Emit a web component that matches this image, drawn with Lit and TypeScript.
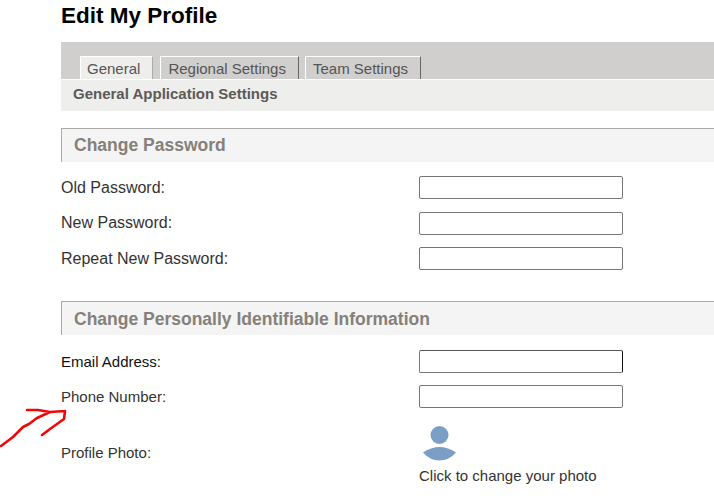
import { LitElement, html, css } from "lit";
import { customElement } from "lit/decorators.js";

@customElement("app-root")
export class AppRoot extends LitElement {
  static styles = css`
    :host {
      display: block;
      position: relative;
      height: 499px;
      overflow: hidden;
      background: #fff;
      font-family: "Liberation Sans", Arial, sans-serif;
      color: #333;
    }
    .page { padding-left: 61px; }
    h1 {
      margin: 0;
      height: 42px;
      padding-top: 2px;
      box-sizing: border-box;
      font-size: 22.5px;
      line-height: 27px;
      font-weight: 700;
      color: #000;
    }
    .tabbar {
      height: 37px;
      background: #d0cfcd;
      display: flex;
      align-items: flex-end;
      padding-left: 19px;
      border-bottom: 1px solid #fff;
    }
    .tab {
      height: 23px;
      box-sizing: border-box;
      padding: 0 12px 0 7px;
      margin-right: 6px;
      border-top: 1px solid #fff;
      border-left: 1px solid #fff;
      border-right: 1px solid #666;
      font-size: 15px;
      line-height: 24px;
      color: #555;
      white-space: nowrap;
    }
    .tab.active { background: #eeeeec; border-right-color: #aaa; margin-right: 7px; padding-left: 6px; }
    .subbar {
      height: 31px;
      background: #eeeeec;
      padding-left: 12px;
      font-size: 15px;
      font-weight: 700;
      line-height: 28px;
      color: #5c5a58;
    }
    .section {
      margin-top: 17px;
      height: 34px;
      box-sizing: border-box;
      border-top: 1px solid #aaa9a7;
      border-left: 1px solid #aaa9a7;
      background: #f4f4f4;
      padding-left: 12px;
      font-size: 17.5px;
      font-weight: 700;
      line-height: 32px;
      color: #85807a;
    }
    .section.second { margin-top: 31px; line-height: 34px; }
    .rows { display: flex; flex-direction: column; }
    .row {
      display: grid;
      grid-template-columns: 358px 204px;
      align-items: center;
      height: 23px;
    }
    .row span { line-height: 18px; }
    .pw { padding-top: 14px; gap: 13px; font-size: 16px; }
    .pw .row:nth-child(2) span { margin-top: -2px; }
    .pw .row:last-child { margin-top: -1px; }
    .info { padding-top: 15px; gap: 12px; font-size: 15px; }
    .box {
      width: 204px;
      height: 23px;
      box-sizing: border-box;
      border: 1px solid #767676;
      border-radius: 2px;
      background: #fff;
      padding: 0;
      margin: 0;
      display: block;
    }
    .box.dark { border-right-color: #111; border-top-color: #555; }
    .email { color: #111; }
    .photo {
      display: grid;
      grid-template-columns: 358px auto;
      font-size: 15px;
      margin-top: 14px;
    }
    .photo-label { padding-top: 22px; line-height: 18px; }
    .photo-side { display: flex; flex-direction: column; }
    .photo-side svg { display: block; width: 40px; height: 40px; }
    .caption { line-height: 18px; margin-top: 5px; white-space: nowrap; }
    .arrow {
      position: absolute;
      left: 0;
      top: 400px;
      width: 70px;
      height: 50px;
      overflow: visible;
      pointer-events: none;
    }
  `;

  render() {
    return html`
      <div class="page">
        <h1>Edit My Profile</h1>
        <div class="tabbar">
          <div class="tab active">General</div>
          <div class="tab">Regional Settings</div>
          <div class="tab">Team Settings</div>
        </div>
        <div class="subbar">General Application Settings</div>
        <div class="section">Change Password</div>
        <div class="rows pw">
          <div class="row"><span>Old Password:</span><input class="box" /></div>
          <div class="row"><span>New Password:</span><input class="box" /></div>
          <div class="row"><span>Repeat New Password:</span><input class="box" /></div>
        </div>
        <div class="section second">Change Personally Identifiable Information</div>
        <div class="rows info">
          <div class="row"><span class="email">Email Address:</span><input class="box dark" /></div>
          <div class="row"><span>Phone Number:</span><input class="box" /></div>
        </div>
        <div class="photo">
          <div class="photo-label">Profile Photo:</div>
          <div class="photo-side">
            <svg viewBox="0 0 40 40">
              <circle cx="20.5" cy="13" r="9" fill="#7b9fc4"></circle>
              <path d="M4 30.5 Q20.5 19.5 37 30.5 Q30 38.5 20.5 38.5 Q11 38.5 4 30.5 Z" fill="#7b9fc4"></path>
            </svg>
            <div class="caption">Click to change your photo</div>
          </div>
        </div>
      </div>
      <svg class="arrow" viewBox="0 0 70 50">
        <path
          d="M1 46 L13 37 L23 27 L29 24 L37 18 L50 12 L65 11 M27 10 L38 10 L50 12 M65 11 L64 19 L50 29 L42 35"
          fill="none"
          stroke="#f00808"
          stroke-width="2.6"
          stroke-linecap="round"
          stroke-linejoin="round"
        ></path>
      </svg>
    `;
  }
}
